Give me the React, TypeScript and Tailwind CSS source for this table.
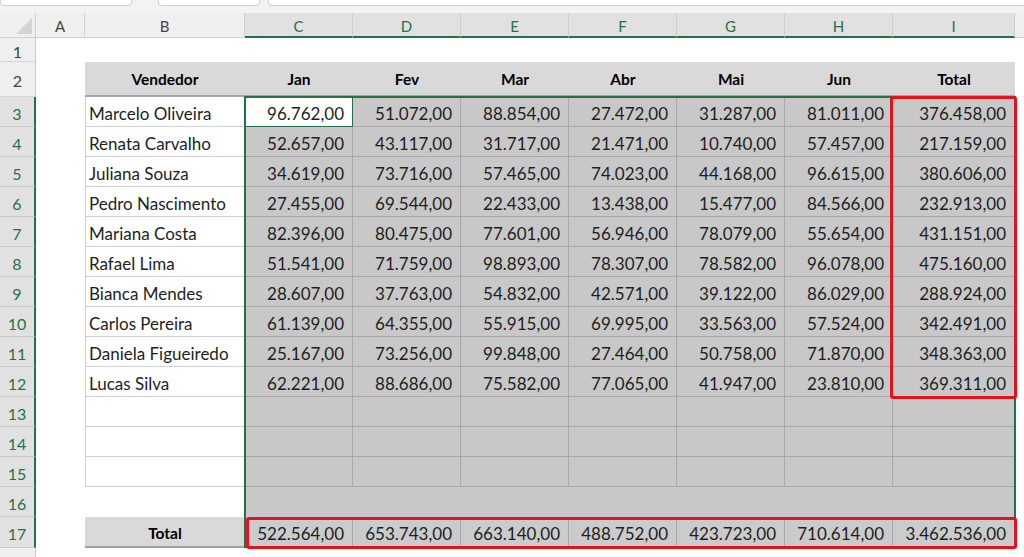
import type { JSX } from "react";

const rows: string[][] = [
  ["Marcelo Oliveira", "96.762,00", "51.072,00", "88.854,00", "27.472,00", "31.287,00", "81.011,00", "376.458,00"],
  ["Renata Carvalho", "52.657,00", "43.117,00", "31.717,00", "21.471,00", "10.740,00", "57.457,00", "217.159,00"],
  ["Juliana Souza", "34.619,00", "73.716,00", "57.465,00", "74.023,00", "44.168,00", "96.615,00", "380.606,00"],
  ["Pedro Nascimento", "27.455,00", "69.544,00", "22.433,00", "13.438,00", "15.477,00", "84.566,00", "232.913,00"],
  ["Mariana Costa", "82.396,00", "80.475,00", "77.601,00", "56.946,00", "78.079,00", "55.654,00", "431.151,00"],
  ["Rafael Lima", "51.541,00", "71.759,00", "98.893,00", "78.307,00", "78.582,00", "96.078,00", "475.160,00"],
  ["Bianca Mendes", "28.607,00", "37.763,00", "54.832,00", "42.571,00", "39.122,00", "86.029,00", "288.924,00"],
  ["Carlos Pereira", "61.139,00", "64.355,00", "55.915,00", "69.995,00", "33.563,00", "57.524,00", "342.491,00"],
  ["Daniela Figueiredo", "25.167,00", "73.256,00", "99.848,00", "27.464,00", "50.758,00", "71.870,00", "348.363,00"],
  ["Lucas Silva", "62.221,00", "88.686,00", "75.582,00", "77.065,00", "41.947,00", "23.810,00", "369.311,00"],
];

const totals = ["522.564,00", "653.743,00", "663.140,00", "488.752,00", "423.723,00", "710.614,00", "3.462.536,00"];
const months = ["Jan", "Fev", "Mar", "Abr", "Mai", "Jun", "Total"];
const letters = ["C", "D", "E", "F", "G", "H", "I"];

// widths of C..I
const w = (i: number) => (i === 6 ? "w-[122px]" : "w-[108px]");

const RowHead = ({ n, sel }: { n: number | string; sel?: boolean }): JSX.Element => (
  <div
    className={
      sel
        ? "w-[36px] shrink-0 flex items-center justify-center pt-[4px] bg-[#e1e1e1] text-[#217346] border-b border-[#c9c9c9] border-r-2 border-r-[#217346] text-[16px]"
        : "w-[36px] shrink-0 flex items-center justify-center pt-[4px] bg-[#efefef] text-[#444] border-b border-[#d6d6d6] border-r border-r-[#c6c6c6] text-[16px]"
    }
  >
    {n}
  </div>
);

const NumCell = ({ i, v, white }: { i: number; v?: string; white?: boolean }): JSX.Element => (
  <div
    className={`${w(i)} shrink-0 flex items-center justify-end pr-[8px] pt-[4px] border-r border-b border-[#a9a9a9] text-[17px] text-[#1e1e1e] ${
      white ? "bg-white" : "bg-[#c8c8c8]"
    }`}
  >
    {v}
  </div>
);

export default function App(): JSX.Element {
  return (
    <div className="relative w-[1024px] h-[557px] overflow-hidden bg-white font-['Lato',sans-serif]">
      {/* toolbar remnants */}
      <div className="h-[13px] bg-[#f3f3f3] relative flex">
        <div className="w-[132px] h-[6px] bg-white border border-t-0 border-[#d2d2d2] rounded-b-[4px]" />
        <div className="ml-[26px] w-[102px] h-[6px] bg-white border border-t-0 border-[#d2d2d2] rounded-b-[4px]" />
        <div className="ml-[8px] flex-1 h-[6px] bg-white border border-t-0 border-r-0 border-[#d2d2d2] rounded-bl-[4px]" />
      </div>

      {/* column headers */}
      <div className="flex h-[25px] text-[15px]">
        <div className="w-[36px] shrink-0 bg-[#efefef] border-r border-b border-[#d0d0d0]">
          <svg width="36" height="25" viewBox="0 0 36 25">
            <polygon points="16,21 32,21 32,5" fill="#d4d4d4" />
          </svg>
        </div>
        <div className="w-[49px] shrink-0 bg-[#efefef] border-r border-b border-[#d0d0d0] flex items-center justify-center pt-[3px] text-[#444]">A</div>
        <div className="w-[160px] shrink-0 bg-[#efefef] border-r border-b border-[#d0d0d0] flex items-center justify-center pt-[3px] text-[#444]">B</div>
        {letters.map((l, i) => (
          <div
            key={l}
            className={`${w(i)} shrink-0 bg-[#e1e1e1] border-r border-r-[#cfcfcf] border-b-2 border-b-[#217346] flex items-center justify-center pt-[3px] text-[#217346]`}
          >
            {l}
          </div>
        ))}
        <div className="flex-1 bg-[#efefef] border-b border-[#d0d0d0]" />
      </div>

      {/* row 1 */}
      <div className="flex h-[24px]">
        <RowHead n={1} />
        <div className="flex-1" />
      </div>

      {/* row 2 - header */}
      <div className="flex h-[35px]">
        <RowHead n={2} />
        <div className="w-[49px] shrink-0" />
        <div className="w-[160px] shrink-0 bg-[#d9d9d9] border-b-2 border-[#a6a6a6] flex items-center justify-center pt-[3px] font-bold text-[15.5px] text-black">
          Vendedor
        </div>
        {months.map((m, i) => (
          <div
            key={m}
            className={`${w(i)} shrink-0 bg-[#d9d9d9] border-b-2 border-[#a6a6a6] flex items-center justify-center pt-[3px] font-bold text-[15.5px] text-black`}
          >
            {m}
          </div>
        ))}
        <div className="flex-1" />
      </div>

      {/* data rows */}
      {rows.map((r, ri) => (
        <div key={r[0]} className="flex h-[30px]">
          <RowHead n={ri + 3} sel />
          <div className="w-[49px] shrink-0" />
          <div className="w-[160px] shrink-0 bg-white border-l border-b border-[#d0d0d0] flex items-center pl-[3px] pt-[4px] text-[17px] text-[#1e1e1e]">
            {r[0]}
          </div>
          {r.slice(1).map((v, i) => (
            <NumCell key={i} i={i} v={v} white={ri === 0 && i === 0} />
          ))}
          <div className="flex-1" />
        </div>
      ))}

      {/* empty rows 13-15 */}
      {[13, 14, 15].map((n) => (
        <div key={n} className="flex h-[30px]">
          <RowHead n={n} sel />
          <div className="w-[49px] shrink-0" />
          <div className="w-[160px] shrink-0 bg-white border-l border-b border-[#d0d0d0]" />
          {letters.map((l, i) => (
            <NumCell key={l} i={i} />
          ))}
          <div className="flex-1" />
        </div>
      ))}

      {/* row 16 */}
      <div className="flex h-[30px]">
        <RowHead n={16} sel />
        <div className="w-[209px] shrink-0" />
        <div className="w-[770px] shrink-0 bg-[#c8c8c8]" />
        <div className="flex-1" />
      </div>

      {/* row 17 - totals */}
      <div className="flex h-[31px]">
        <RowHead n={17} sel />
        <div className="w-[49px] shrink-0" />
        <div className="w-[160px] shrink-0 bg-[#d9d9d9] border-b-2 border-[#a0a0a0] flex items-center justify-center pt-[4px] font-bold text-[15.5px] text-black">
          Total
        </div>
        {totals.map((t, i) => (
          <div
            key={i}
            className={`${w(i)} shrink-0 bg-[#cbcbcb] border-r border-r-[#a9a9a9] border-b-2 border-b-[#a0a0a0] flex items-center justify-end pr-[8px] pt-[4px] text-[17px] text-[#1e1e1e]`}
          >
            {t}
          </div>
        ))}
        <div className="flex-1" />
      </div>

      {/* row 18 partial */}
      <div className="flex h-[12px]">
        <div className="w-[36px] shrink-0 bg-[#efefef] border-r border-[#c6c6c6]" />
        <div className="flex-1" />
      </div>

      {/* selection outline + active cell */}
      <div className="absolute left-[244px] top-[96px] w-[772px] h-[452px] border-2 border-[#217346] pointer-events-none" />
      <div className="absolute left-[245px] top-[97px] w-[108px] h-[30px] border border-[#217346] pointer-events-none" />

      {/* red highlight boxes */}
      <div className="absolute left-[890px] top-[96px] w-[127px] h-[303px] border-[3px] border-[#e3131b] rounded-[3px]" />
      <div className="absolute left-[246px] top-[517px] w-[771px] h-[32px] border-[3px] border-[#e3131b] rounded-[3px]" />
    </div>
  );
}
